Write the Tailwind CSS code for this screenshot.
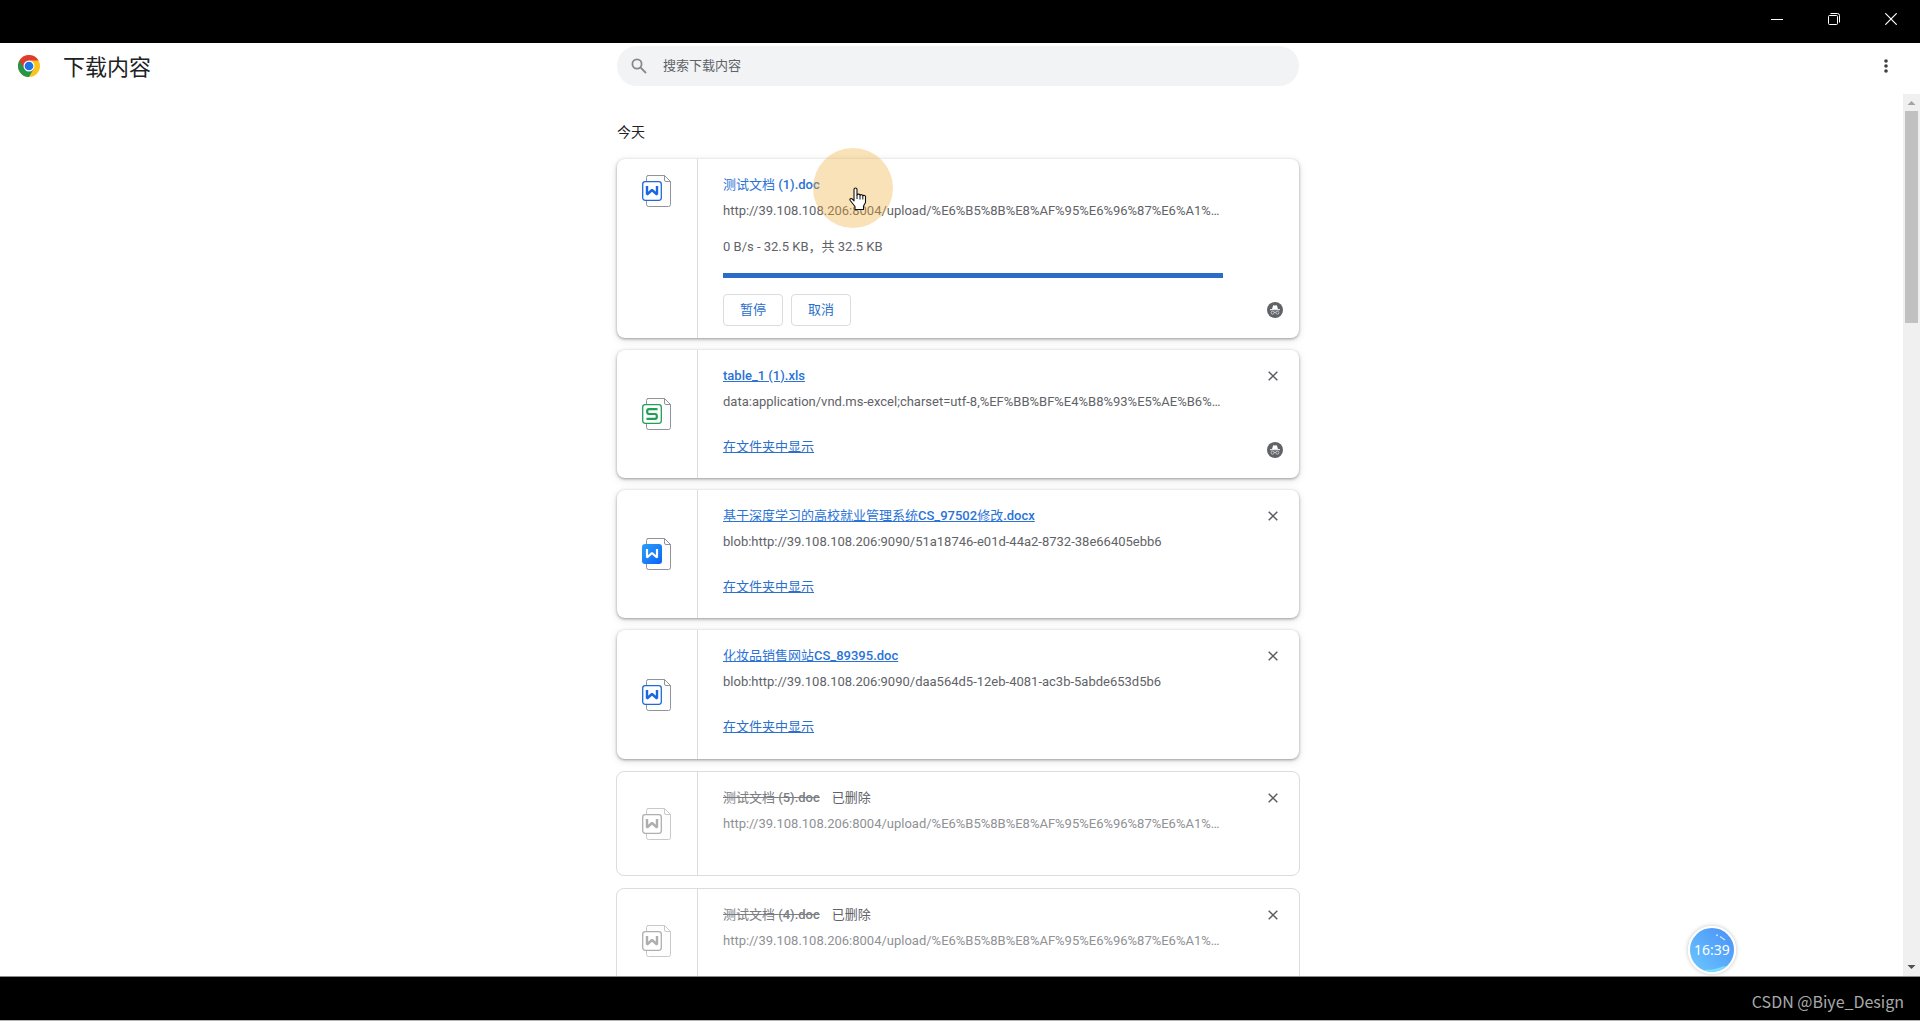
<!DOCTYPE html>
<html lang="zh-CN">
<head>
    <meta charset="UTF-8">
    <meta name="viewport" content="width=device-width, initial-scale=1.0">
    <title>下载内容</title>
    <script src="https://cdn.jsdelivr.net/npm/@tailwindcss/browser@4"></script>
    <style>
        body {
            font-family: Roboto, 'Noto Sans CJK SC', sans-serif;
        }
    </style>
</head>
<body class="flex h-screen flex-col overflow-hidden bg-white text-[13px] leading-5 text-[#5f6368]">
    <!-- Shared icons -->
    <svg class="absolute size-0" aria-hidden="true">
        <linearGradient id="blue" x1="0" y1="0" x2="1" y2="1">
            <stop offset="0" stop-color="#2ba0fb"/>
            <stop offset="1" stop-color="#0b63f6"/>
        </linearGradient>
        <symbol id="page" viewBox="0 0 30 32">
            <path d="M5.500 .5H22.500L28.500 6.500V29.500a2 2 0 0 1-2 2H6.500a2 2 0 0 1-2-2V2.500a2 2 0 0 1 2-2z" fill="#fdfdfe" stroke="#8f949c"/>
            <path d="M22.500 .5V5a1.500 1.500 0 0 0 1.500 1.500H28.500z" fill="#fff" stroke="#8f949c"/>
        </symbol>
        <symbol id="doc" viewBox="0 0 30 32">
            <use href="#page"/>
            <rect x=".7" y="6.700" width="18.600" height="18.600" rx="2.500" fill="#fff" stroke="#1f6ad6" stroke-width="1.300"/>
            <path d="M5 11V19.500L10 15L15 19.500V11" fill="none" stroke="#1a68e0" stroke-width="2.400" stroke-linejoin="bevel"/>
        </symbol>
        <symbol id="docx" viewBox="0 0 30 32">
            <use href="#page"/>
            <rect x="0" y="6" width="20" height="20" rx="3" fill="url(#blue)"/>
            <path d="M5 11V19.500L10 15L15 19.500V11" fill="none" stroke="#fff" stroke-width="2.200" stroke-linejoin="bevel"/>
        </symbol>
        <symbol id="xls" viewBox="0 0 30 32">
            <use href="#page"/>
            <rect x=".7" y="6.700" width="18.600" height="18.600" rx="2.500" fill="#fff" stroke="#1fa055" stroke-width="1.300"/>
            <path d="M15.500 11.200H7A1.800 1.800 0 0 0 5.200 13V14.200A1.800 1.800 0 0 0 7 16H13A1.800 1.800 0 0 1 14.800 17.800V19A1.800 1.800 0 0 1 13 20.800H4.500" fill="none" stroke="#1fa055" stroke-width="2.200"/>
        </symbol>
        <symbol id="close" viewBox="0 0 10 10">
            <path d="M.7 .7L9.300 9.300M9.300 .7L.7 9.300" stroke="#5a5d61" stroke-width="1.500"/>
        </symbol>
        <symbol id="incognito" viewBox="0 0 16 16">
            <circle cx="8" cy="8" r="8" fill="#5f6368"/>
            <path d="M6.200 3.200L8 3.600L9.800 3.200L11 7H5z" fill="#fff"/>
            <path d="M3 7.700H13" stroke="#fff" stroke-width="1"/>
            <circle cx="5.600" cy="10.700" r="1.500" fill="none" stroke="#d5d7da" stroke-width=".8"/>
            <circle cx="10.400" cy="10.700" r="1.500" fill="none" stroke="#d5d7da" stroke-width=".8"/>
            <path d="M7 10.500Q8 9.800 9 10.500" fill="none" stroke="#d5d7da" stroke-width=".8"/>
        </symbol>
    </svg>

    <!-- Window controls -->
    <div class="flex h-[43px] shrink-0 items-center justify-end gap-[45px] bg-black pr-[23px] pb-[5px]">
        <button type="button" aria-label="最小化"><svg class="size-3" viewBox="0 0 12 12"><path d="M0 6.500H12" stroke="#fff"/></svg></button>
        <button type="button" aria-label="还原"><svg class="size-3" viewBox="0 0 12 12" fill="none" stroke="#fff"><rect x=".5" y="2.500" width="9" height="9" rx="1"/><path d="M2.500 .5H9.500a2 2 0 0 1 2 2V9.500"/></svg></button>
        <button type="button" aria-label="关闭"><svg class="size-3" viewBox="0 0 12 12"><path d="M.3 .3L11.700 11.700M11.700 .3L.3 11.700" stroke="#fff" stroke-width="1.200"/></svg></button>
    </div>

    <!-- Toolbar -->
    <header class="grid h-[51px] shrink-0 grid-cols-[1fr_minmax(0,682px)_1fr] items-start pt-[3px] pr-1">
        <div class="flex h-10 items-center gap-[23px] pl-[18px]">
            <svg class="size-[22px]" viewBox="0 0 48 48">
                <circle cx="24" cy="24" r="24" fill="#fcc31e"/>
                <path d="M24 24L3.200 12A24 24 0 0 0 24 48L34.400 30z" fill="#27964a"/>
                <path d="M24 24V12H44.800A24 24 0 0 0 3.200 12L13.600 30z" fill="#e03b30"/>
                <circle cx="24" cy="24" r="12" fill="#fff"/>
                <circle cx="24" cy="24" r="9.500" fill="#1a73e8"/>
            </svg>
            <h1 class="pt-1 text-[22px] leading-8 text-[#202124]">下载内容</h1>
        </div>
        <label class="flex h-10 items-center gap-4 rounded-full bg-[#f1f3f4] pl-[14px]">
            <svg class="size-4" viewBox="0 0 16 16" fill="none" stroke="#85888c" stroke-width="1.800"><circle cx="6" cy="6" r="4.600"/><path d="M9.400 9.400L15 15"/></svg>
            <input type="search" aria-label="搜索下载内容" placeholder="搜索下载内容" class="flex-1 bg-transparent outline-none placeholder:text-[#5f6368]">
        </label>
        <div class="flex h-10 items-center justify-end pr-[22px]">
            <button type="button" aria-label="更多操作"><svg class="size-4" viewBox="0 0 16 16" fill="#3c4043"><circle cx="8" cy="3" r="1.800"/><circle cx="8" cy="8" r="1.800"/><circle cx="8" cy="13" r="1.800"/></svg></button>
        </div>
    </header>

    <div class="relative flex min-h-0 flex-1 overflow-hidden">
        <main class="min-w-0 flex-1 pl-[13px]">
            <div class="mx-auto w-full max-w-[682px]">
                <h2 class="pt-7 pb-[17px] text-sm leading-5 text-[#202124]">今天</h2>
                <div class="flex flex-col gap-3">

                    <article class="relative flex h-[179px] rounded-lg bg-white shadow-[0_1px_3px_rgba(0,0,0,0.35),0_2px_8px_rgba(0,0,0,0.12)]">
                        <div class="flex w-[81px] shrink-0 border-r border-[#dadce0] pt-4 pl-[25px]">
                            <svg class="h-8 w-[30px]"><use href="#doc"/></svg>
                        </div>
                        <div class="min-w-0 flex-1 pt-4 pl-[25px]">
                            <div class="w-[500px]">
                                <p class="text-[#2a73d6]">测试文档 <span class="font-medium">(1).doc</span></p>
                                <p class="mt-[6px] whitespace-nowrap">http://39.108.108.206:8004/upload/%E6%B5%8B%E8%AF%95%E6%96%87%E6%A1%…</p>
                                <p class="mt-4">0 B/s - 32.5 KB，共 32.5 KB</p>
                                <div role="progressbar" aria-label="下载进度" class="mt-4 h-[5px] bg-[#2b6cc8]"></div>
                                <div class="mt-4 flex gap-2 text-[#2a6fca]">
                                    <button type="button" class="h-8 w-[60px] rounded border border-[#dadce0]">暂停</button>
                                    <button type="button" class="h-8 w-[60px] rounded border border-[#dadce0]">取消</button>
                                </div>
                            </div>
                        </div>
                        <svg class="absolute right-4 bottom-5 size-4"><use href="#incognito"/></svg>
                    </article>

                    <article class="relative flex h-32 rounded-lg bg-white shadow-[0_1px_3px_rgba(0,0,0,0.35),0_2px_8px_rgba(0,0,0,0.12)]">
                        <div class="flex w-[81px] shrink-0 items-center border-r border-[#dadce0] pl-[25px]">
                            <svg class="h-8 w-[30px]"><use href="#xls"/></svg>
                        </div>
                        <div class="min-w-0 flex-1 pt-4 pl-[25px]">
                            <div class="w-[500px]">
                                <p><a href="#" class="font-medium text-[#2a73d6] underline">table_1 (1).xls</a></p>
                                <p class="mt-[6px] whitespace-nowrap">data:application/vnd.ms-excel;charset=utf-8,%EF%BB%BF%E4%B8%93%E5%AE%B6%…</p>
                                <p class="mt-[25px]"><a href="#" class="text-[#2a6fca] underline">在文件夹中显示</a></p>
                            </div>
                        </div>
                        <button type="button" aria-label="移除" class="absolute top-[21px] right-[21px]"><svg class="size-[10px]"><use href="#close"/></svg></button>
                        <svg class="absolute right-4 bottom-5 size-4"><use href="#incognito"/></svg>
                    </article>

                    <article class="relative flex h-32 rounded-lg bg-white shadow-[0_1px_3px_rgba(0,0,0,0.35),0_2px_8px_rgba(0,0,0,0.12)]">
                        <div class="flex w-[81px] shrink-0 items-center border-r border-[#dadce0] pl-[25px]">
                            <svg class="h-8 w-[30px]"><use href="#docx"/></svg>
                        </div>
                        <div class="min-w-0 flex-1 pt-4 pl-[25px]">
                            <div class="w-[500px]">
                                <p><a href="#" class="text-[#2a73d6] underline">基于深度学习的高校就业管理系统<span class="font-medium">CS_97502</span>修改<span class="font-medium">.docx</span></a></p>
                                <p class="mt-[6px] whitespace-nowrap">blob:http://39.108.108.206:9090/51a18746-e01d-44a2-8732-38e66405ebb6</p>
                                <p class="mt-[25px]"><a href="#" class="text-[#2a6fca] underline">在文件夹中显示</a></p>
                            </div>
                        </div>
                        <button type="button" aria-label="移除" class="absolute top-[21px] right-[21px]"><svg class="size-[10px]"><use href="#close"/></svg></button>
                    </article>

                    <article class="relative flex h-[129px] rounded-lg bg-white shadow-[0_1px_3px_rgba(0,0,0,0.35),0_2px_8px_rgba(0,0,0,0.12)]">
                        <div class="flex w-[81px] shrink-0 items-center border-r border-[#dadce0] pl-[25px]">
                            <svg class="h-8 w-[30px]"><use href="#doc"/></svg>
                        </div>
                        <div class="min-w-0 flex-1 pt-4 pl-[25px]">
                            <div class="w-[500px]">
                                <p><a href="#" class="text-[#2a73d6] underline">化妆品销售网站<span class="font-medium">CS_89395.doc</span></a></p>
                                <p class="mt-[6px] whitespace-nowrap">blob:http://39.108.108.206:9090/daa564d5-12eb-4081-ac3b-5abde653d5b6</p>
                                <p class="mt-[25px]"><a href="#" class="text-[#2a6fca] underline">在文件夹中显示</a></p>
                            </div>
                        </div>
                        <button type="button" aria-label="移除" class="absolute top-[21px] right-[21px]"><svg class="size-[10px]"><use href="#close"/></svg></button>
                    </article>

                    <article class="relative -mx-px flex h-[105px] rounded-lg border border-[#dadce0] bg-white">
                        <div class="flex w-[81px] shrink-0 items-center border-r border-[#dadce0] pl-[25px]">
                            <svg class="h-8 w-[30px] opacity-50 grayscale"><use href="#doc"/></svg>
                        </div>
                        <div class="min-w-0 flex-1 pt-4 pl-[25px]">
                            <div class="w-[500px]">
                                <p class="flex gap-3"><span class="text-[#7b7e82] line-through">测试文档 <span class="font-medium">(5).doc</span></span><span>已删除</span></p>
                                <p class="mt-[6px] whitespace-nowrap text-[#8f9195]">http://39.108.108.206:8004/upload/%E6%B5%8B%E8%AF%95%E6%96%87%E6%A1%…</p>
                            </div>
                        </div>
                        <button type="button" aria-label="移除" class="absolute top-[21px] right-[21px]"><svg class="size-[10px]"><use href="#close"/></svg></button>
                    </article>

                    <article class="relative -mx-px flex h-[105px] rounded-lg border border-[#dadce0] bg-white">
                        <div class="flex w-[81px] shrink-0 items-center border-r border-[#dadce0] pl-[25px]">
                            <svg class="h-8 w-[30px] opacity-50 grayscale"><use href="#doc"/></svg>
                        </div>
                        <div class="min-w-0 flex-1 pt-4 pl-[25px]">
                            <div class="w-[500px]">
                                <p class="flex gap-3"><span class="text-[#7b7e82] line-through">测试文档 <span class="font-medium">(4).doc</span></span><span>已删除</span></p>
                                <p class="mt-[6px] whitespace-nowrap text-[#8f9195]">http://39.108.108.206:8004/upload/%E6%B5%8B%E8%AF%95%E6%96%87%E6%A1%…</p>
                            </div>
                        </div>
                        <button type="button" aria-label="移除" class="absolute top-[21px] right-[21px]"><svg class="size-[10px]"><use href="#close"/></svg></button>
                    </article>
                </div>
            </div>
        </main>

        <!-- Scrollbar -->
        <div class="flex w-[17px] shrink-0 flex-col items-center bg-[#f0f0f0]">
            <svg class="size-[17px] shrink-0" viewBox="0 0 17 17"><path d="M4.500 11L8.500 7L12.500 11z" fill="#a3a3a3"/></svg>
            <div class="min-h-0 w-[13px] flex-1"><div class="h-1/4 bg-[#c1c1c1]"></div></div>
            <svg class="size-[17px] shrink-0" viewBox="0 0 17 17"><path d="M4.500 6L8.500 10L12.500 6z" fill="#505050"/></svg>
        </div>

        <!-- Floating clock -->
        <div class="absolute right-[184px] bottom-[2px] flex size-12 items-center justify-center overflow-hidden rounded-full border-2 border-white bg-linear-to-tr from-[#6cc8fd] to-[#4a8ff7] shadow-[0_0_4px_rgba(0,0,0,0.25)]">
            <svg class="absolute inset-0 size-11" viewBox="0 0 44 44" fill="none">
                <path d="M12 42Q24 42 30 39.500T42 40V44H12z" fill="#7fdcff"/>
                <path d="M26 7L28 7.500M30 8.500L35 12" stroke="#c8e4ff" stroke-width="1.400"/>
            </svg>
            <time class="relative font-['Noto_Sans'] text-sm text-white">16:39</time>
        </div>
    </div>

    <footer class="flex h-[45px] shrink-0 items-center justify-end border-y border-t-[#8a8a8a] border-b-[#b5b5b5] bg-black pt-1 pr-4 font-['Noto_Sans_CJK_SC'] text-base text-[#a9a9a9]">CSDN @Biye_Design</footer>

    <!-- Click highlight and pointer -->
    <div class="pointer-events-none absolute top-[148px] left-1/2 ml-[-147px] size-20 rounded-full bg-[#f1ac34]/35"></div>
    <svg class="pointer-events-none absolute top-[187px] left-1/2 ml-[-111px] h-6 w-[18px]" viewBox="0 0 18 24">
        <path d="M5 2.500a1.500 1.500 0 0 1 3 0V8.500a1.400 1.400 0 0 1 3 .3a1.400 1.400 0 0 1 2.800 .6a1.400 1.400 0 0 1 2.700 .8V15.500L14.500 19V22.500H6V19.500L1.200 13.500C.2 12 2 10.800 3.300 12L5 13.800z" fill="#fff" stroke="#111" stroke-width="1.100" stroke-linejoin="round"/>
        <path d="M8 8.500V12M11 9V12.500M13.800 9.700V12.500" stroke="#111"/>
    </svg>
</body>
</html>
